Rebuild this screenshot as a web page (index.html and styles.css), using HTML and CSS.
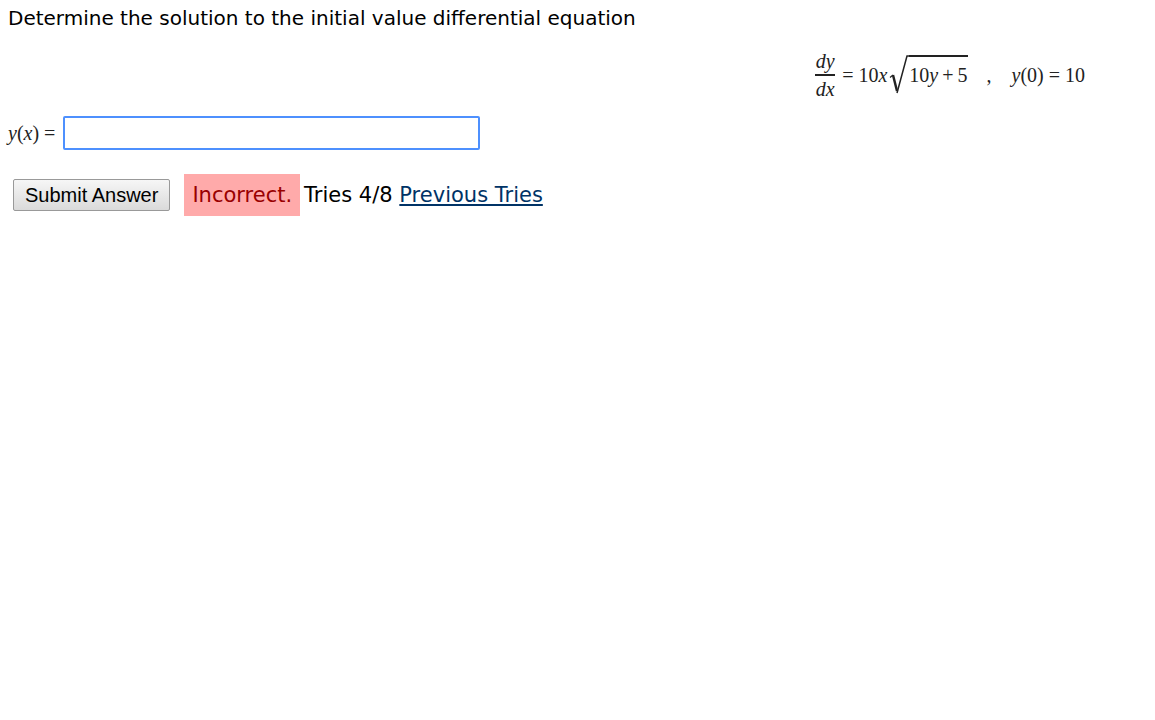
FILE: index.html
```
<!DOCTYPE html>
<html lang="en">

<head>
    <meta charset="UTF-8">
    <meta name="viewport" content="width=device-width, initial-scale=1.0">
    <title>Initial Value Problem</title>
    <link rel="stylesheet" href="styles.css">
</head>

<body>

    <p class="question">Determine the solution to the initial value differential equation</p>

    <!-- Equation and initial condition -->
    <div class="equation">
        <span class="fraction">
            <i class="numerator">dy</i>
            <i class="denominator">dx</i>
        </span>
        <span class="equals">= 10<i>x</i></span>
        <span class="root">
            <svg class="radical" width="20" height="40" viewBox="0 0 20 40" aria-hidden="true">
                <path d="M1 22.500l3-2.500" fill="none" stroke="#222" stroke-width="1.200" />
                <path d="M4 20l4 16" fill="none" stroke="#222" stroke-width="2.500" />
                <path d="M8 38L18 1h2" fill="none" stroke="#222" stroke-width="1.500" />
            </svg>
            <span class="radicand">10<i>y</i>&thinsp;+&thinsp;5</span>
        </span>
        <span class="comma">,</span>
        <span><i>y</i>(0) = 10</span>
    </div>

    <form>
        <!-- Answer field -->
        <div class="answer">
            <label for="answer"><i>y</i>(<i>x</i>) =</label>
            <input type="text" id="answer" autocomplete="off">
        </div>

        <div class="actions">
            <button type="button">Submit Answer</button>
            <span class="incorrect">Incorrect.</span>
            <span class="tries">Tries 4/8 <a href="#">Previous Tries</a></span>
        </div>
    </form>

</body>

</html>
```
FILE: styles.css
```
* {
    margin: 0;
    padding: 0;
    box-sizing: border-box;
}

body {
    font-family: Verdana, "DejaVu Sans", sans-serif;
    font-size: 20px;
    line-height: 24px;
    color: #000;
    background-color: #fff;
    padding: 6px 8px;
}

/* Equation sits at the right of the page */
.equation {
    display: flex;
    justify-content: flex-end;
    align-items: center;
    margin-top: 18px;
    padding-right: 62px;
    font-family: "Liberation Serif", serif;
    color: #222;
}

.fraction {
    display: flex;
    flex-direction: column;
    width: 20px;
    line-height: 26px;
    text-align: center;
}

.numerator {
    border-bottom: 2px solid #222;
}

.equals {
    margin-left: 7px;
}

.root {
    display: flex;
    margin-left: 2px;
}

.radical {
    display: block;
}

.radicand {
    height: 40px;
    border-top: 2px solid #222;
    line-height: 36px;
}

.comma {
    margin: 0 20px 0 19px;
}

/* Answer row */
.answer {
    display: flex;
    align-items: center;
    margin-top: 14px;
}

.answer label {
    font-family: "Liberation Serif", serif;
    color: #222;
}

.answer input {
    width: 417px;
    height: 34px;
    margin-left: 8px;
    padding: 0 6px;
    border: 2px solid #4d90fe;
    border-radius: 2px;
    outline: none;
    font-family: inherit;
    font-size: 20px;
}

/* Submit button, result and tries */
.actions {
    display: flex;
    align-items: center;
    margin-top: 24px;
    padding-left: 5px;
    font-size: 21px;
}

.actions button {
    height: 32px;
    padding: 0 11px;
    border: 1px solid #999;
    border-radius: 2px;
    background: linear-gradient(#f6f6f6, #dadada);
    font-family: "Liberation Sans", Arial, sans-serif;
    font-size: 20px;
    color: #000;
    cursor: pointer;
}

.incorrect {
    margin-left: 14px;
    padding: 9px 8px;
    background-color: #faa;
    color: #900;
}

.tries {
    margin-left: 4px;
}

.tries a {
    color: #036;
}
```
